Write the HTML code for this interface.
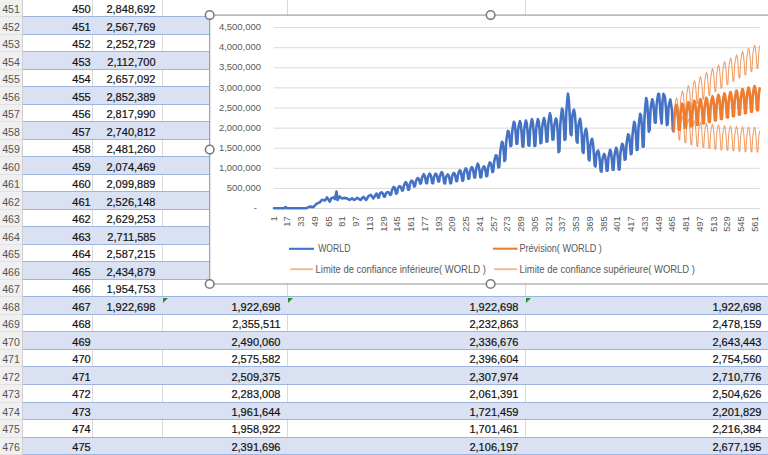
<!DOCTYPE html>
<html><head><meta charset="utf-8"><style>
html,body{margin:0;padding:0;}
body{width:768px;height:455px;overflow:hidden;position:relative;background:#fff;font-family:"Liberation Sans",sans-serif;}
.r{position:absolute;left:23px;width:745px;}
.band{background:#D9E1F2;}
.hl{position:absolute;left:23px;width:745px;height:1px;background:#9CB4DF;}
.hh{position:absolute;left:0;width:22px;height:1px;background:#E2E2E2;}
.vg{position:absolute;width:1px;background:#D9D9D9;}
.t{position:absolute;font-size:11.8px;line-height:13px;transform:scaleX(0.935);transform-origin:100% 50%;color:#111;-webkit-text-stroke:0.2px #111;white-space:nowrap;text-align:right;}
.h{position:absolute;left:0;width:22px;font-size:10.6px;line-height:13px;color:#555;text-align:center;}
.tri{position:absolute;width:0;height:0;border-top:5px solid #2E8B2E;border-right:5px solid transparent;}
</style></head><body>
<div style="position:absolute;left:0;top:0;width:22px;height:455px;background:#F0F0F0;"></div>
<div style="position:absolute;left:22px;top:0;width:1px;height:455px;background:#CFCFCF;"></div>

<div class="vg" style="left:92px;top:0px;height:16px"></div>
<div class="vg" style="left:162px;top:0px;height:16px"></div>
<div class="vg" style="left:287px;top:0px;height:16px"></div>
<div class="vg" style="left:525px;top:0px;height:16px"></div>
<div class="h" style="top:3.29px">451</div>
<div class="t" style="top:3.29px;right:677.8px">450</div>
<div class="t" style="top:3.29px;right:612.4px">2,848,692</div>
<div class="r band" style="top:17px;height:17px"></div>
<div class="h" style="top:20.80px">452</div>
<div class="t" style="top:20.80px;right:677.8px">451</div>
<div class="t" style="top:20.80px;right:612.4px">2,567,769</div>
<div class="vg" style="left:92px;top:35px;height:16px"></div>
<div class="vg" style="left:162px;top:35px;height:16px"></div>
<div class="vg" style="left:287px;top:35px;height:16px"></div>
<div class="vg" style="left:525px;top:35px;height:16px"></div>
<div class="h" style="top:38.30px">453</div>
<div class="t" style="top:38.30px;right:677.8px">452</div>
<div class="t" style="top:38.30px;right:612.4px">2,252,729</div>
<div class="r band" style="top:52px;height:17px"></div>
<div class="h" style="top:55.81px">454</div>
<div class="t" style="top:55.81px;right:677.8px">453</div>
<div class="t" style="top:55.81px;right:612.4px">2,112,700</div>
<div class="vg" style="left:92px;top:70px;height:16px"></div>
<div class="vg" style="left:162px;top:70px;height:16px"></div>
<div class="vg" style="left:287px;top:70px;height:16px"></div>
<div class="vg" style="left:525px;top:70px;height:16px"></div>
<div class="h" style="top:73.31px">455</div>
<div class="t" style="top:73.31px;right:677.8px">454</div>
<div class="t" style="top:73.31px;right:612.4px">2,657,092</div>
<div class="r band" style="top:87px;height:17px"></div>
<div class="h" style="top:90.82px">456</div>
<div class="t" style="top:90.82px;right:677.8px">455</div>
<div class="t" style="top:90.82px;right:612.4px">2,852,389</div>
<div class="vg" style="left:92px;top:105px;height:16px"></div>
<div class="vg" style="left:162px;top:105px;height:16px"></div>
<div class="vg" style="left:287px;top:105px;height:16px"></div>
<div class="vg" style="left:525px;top:105px;height:16px"></div>
<div class="h" style="top:108.32px">457</div>
<div class="t" style="top:108.32px;right:677.8px">456</div>
<div class="t" style="top:108.32px;right:612.4px">2,817,990</div>
<div class="r band" style="top:122px;height:17px"></div>
<div class="h" style="top:125.83px">458</div>
<div class="t" style="top:125.83px;right:677.8px">457</div>
<div class="t" style="top:125.83px;right:612.4px">2,740,812</div>
<div class="vg" style="left:92px;top:140px;height:16px"></div>
<div class="vg" style="left:162px;top:140px;height:16px"></div>
<div class="vg" style="left:287px;top:140px;height:16px"></div>
<div class="vg" style="left:525px;top:140px;height:16px"></div>
<div class="h" style="top:143.34px">459</div>
<div class="t" style="top:143.34px;right:677.8px">458</div>
<div class="t" style="top:143.34px;right:612.4px">2,481,260</div>
<div class="r band" style="top:157px;height:17px"></div>
<div class="h" style="top:160.84px">460</div>
<div class="t" style="top:160.84px;right:677.8px">459</div>
<div class="t" style="top:160.84px;right:612.4px">2,074,469</div>
<div class="vg" style="left:92px;top:175px;height:16px"></div>
<div class="vg" style="left:162px;top:175px;height:16px"></div>
<div class="vg" style="left:287px;top:175px;height:16px"></div>
<div class="vg" style="left:525px;top:175px;height:16px"></div>
<div class="h" style="top:178.34px">461</div>
<div class="t" style="top:178.34px;right:677.8px">460</div>
<div class="t" style="top:178.34px;right:612.4px">2,099,889</div>
<div class="r band" style="top:192px;height:17px"></div>
<div class="h" style="top:195.85px">462</div>
<div class="t" style="top:195.85px;right:677.8px">461</div>
<div class="t" style="top:195.85px;right:612.4px">2,526,148</div>
<div class="vg" style="left:92px;top:210px;height:16px"></div>
<div class="vg" style="left:162px;top:210px;height:16px"></div>
<div class="vg" style="left:287px;top:210px;height:16px"></div>
<div class="vg" style="left:525px;top:210px;height:16px"></div>
<div class="h" style="top:213.35px">463</div>
<div class="t" style="top:213.35px;right:677.8px">462</div>
<div class="t" style="top:213.35px;right:612.4px">2,629,253</div>
<div class="r band" style="top:227px;height:17px"></div>
<div class="h" style="top:230.86px">464</div>
<div class="t" style="top:230.86px;right:677.8px">463</div>
<div class="t" style="top:230.86px;right:612.4px">2,711,585</div>
<div class="vg" style="left:92px;top:245px;height:16px"></div>
<div class="vg" style="left:162px;top:245px;height:16px"></div>
<div class="vg" style="left:287px;top:245px;height:16px"></div>
<div class="vg" style="left:525px;top:245px;height:16px"></div>
<div class="h" style="top:248.37px">465</div>
<div class="t" style="top:248.37px;right:677.8px">464</div>
<div class="t" style="top:248.37px;right:612.4px">2,587,215</div>
<div class="r band" style="top:262px;height:17px"></div>
<div class="h" style="top:265.87px">466</div>
<div class="t" style="top:265.87px;right:677.8px">465</div>
<div class="t" style="top:265.87px;right:612.4px">2,434,879</div>
<div class="vg" style="left:92px;top:280px;height:16px"></div>
<div class="vg" style="left:162px;top:280px;height:16px"></div>
<div class="vg" style="left:287px;top:280px;height:16px"></div>
<div class="vg" style="left:525px;top:280px;height:16px"></div>
<div class="h" style="top:283.37px">467</div>
<div class="t" style="top:283.37px;right:677.8px">466</div>
<div class="t" style="top:283.37px;right:612.4px">1,954,753</div>
<div class="r band" style="top:297px;height:17px"></div>
<div class="h" style="top:300.88px">468</div>
<div class="t" style="top:300.88px;right:677.8px">467</div>
<div class="t" style="top:300.88px;right:612.4px">1,922,698</div>
<div class="t" style="top:300.88px;right:487.3px">1,922,698</div>
<div class="t" style="top:300.88px;right:249.2px">1,922,698</div>
<div class="t" style="top:300.88px;right:6.4px">1,922,698</div>
<div class="tri" style="left:163px;top:298.2px"></div>
<div class="tri" style="left:288px;top:298.2px"></div>
<div class="tri" style="left:526px;top:298.2px"></div>
<div class="vg" style="left:92px;top:315px;height:16px"></div>
<div class="vg" style="left:162px;top:315px;height:16px"></div>
<div class="vg" style="left:287px;top:315px;height:16px"></div>
<div class="vg" style="left:525px;top:315px;height:16px"></div>
<div class="h" style="top:318.38px">469</div>
<div class="t" style="top:318.38px;right:677.8px">468</div>
<div class="t" style="top:318.38px;right:487.3px">2,355,511</div>
<div class="t" style="top:318.38px;right:249.2px">2,232,863</div>
<div class="t" style="top:318.38px;right:6.4px">2,478,159</div>
<div class="r band" style="top:332px;height:17px"></div>
<div class="h" style="top:335.89px">470</div>
<div class="t" style="top:335.89px;right:677.8px">469</div>
<div class="t" style="top:335.89px;right:487.3px">2,490,060</div>
<div class="t" style="top:335.89px;right:249.2px">2,336,676</div>
<div class="t" style="top:335.89px;right:6.4px">2,643,443</div>
<div class="vg" style="left:92px;top:350px;height:16px"></div>
<div class="vg" style="left:162px;top:350px;height:16px"></div>
<div class="vg" style="left:287px;top:350px;height:16px"></div>
<div class="vg" style="left:525px;top:350px;height:16px"></div>
<div class="h" style="top:353.39px">471</div>
<div class="t" style="top:353.39px;right:677.8px">470</div>
<div class="t" style="top:353.39px;right:487.3px">2,575,582</div>
<div class="t" style="top:353.39px;right:249.2px">2,396,604</div>
<div class="t" style="top:353.39px;right:6.4px">2,754,560</div>
<div class="r band" style="top:367px;height:17px"></div>
<div class="h" style="top:370.90px">472</div>
<div class="t" style="top:370.90px;right:677.8px">471</div>
<div class="t" style="top:370.90px;right:487.3px">2,509,375</div>
<div class="t" style="top:370.90px;right:249.2px">2,307,974</div>
<div class="t" style="top:370.90px;right:6.4px">2,710,776</div>
<div class="vg" style="left:92px;top:385px;height:17px"></div>
<div class="vg" style="left:162px;top:385px;height:17px"></div>
<div class="vg" style="left:287px;top:385px;height:17px"></div>
<div class="vg" style="left:525px;top:385px;height:17px"></div>
<div class="h" style="top:388.40px">473</div>
<div class="t" style="top:388.40px;right:677.8px">472</div>
<div class="t" style="top:388.40px;right:487.3px">2,283,008</div>
<div class="t" style="top:388.40px;right:249.2px">2,061,391</div>
<div class="t" style="top:388.40px;right:6.4px">2,504,626</div>
<div class="r band" style="top:403px;height:16px"></div>
<div class="h" style="top:405.91px">474</div>
<div class="t" style="top:405.91px;right:677.8px">473</div>
<div class="t" style="top:405.91px;right:487.3px">1,961,644</div>
<div class="t" style="top:405.91px;right:249.2px">1,721,459</div>
<div class="t" style="top:405.91px;right:6.4px">2,201,829</div>
<div class="vg" style="left:92px;top:420px;height:17px"></div>
<div class="vg" style="left:162px;top:420px;height:17px"></div>
<div class="vg" style="left:287px;top:420px;height:17px"></div>
<div class="vg" style="left:525px;top:420px;height:17px"></div>
<div class="h" style="top:423.41px">475</div>
<div class="t" style="top:423.41px;right:677.8px">474</div>
<div class="t" style="top:423.41px;right:487.3px">1,958,922</div>
<div class="t" style="top:423.41px;right:249.2px">1,701,461</div>
<div class="t" style="top:423.41px;right:6.4px">2,216,384</div>
<div class="r band" style="top:438px;height:16px"></div>
<div class="h" style="top:440.92px">476</div>
<div class="t" style="top:440.92px;right:677.8px">475</div>
<div class="t" style="top:440.92px;right:487.3px">2,391,696</div>
<div class="t" style="top:440.92px;right:249.2px">2,106,197</div>
<div class="t" style="top:440.92px;right:6.4px">2,677,195</div>
<div class="hl" style="top:16px"></div>
<div class="hh" style="top:16px"></div>
<div class="hl" style="top:34px"></div>
<div class="hh" style="top:34px"></div>
<div class="hl" style="top:51px"></div>
<div class="hh" style="top:51px"></div>
<div class="hl" style="top:69px"></div>
<div class="hh" style="top:69px"></div>
<div class="hl" style="top:86px"></div>
<div class="hh" style="top:86px"></div>
<div class="hl" style="top:104px"></div>
<div class="hh" style="top:104px"></div>
<div class="hl" style="top:121px"></div>
<div class="hh" style="top:121px"></div>
<div class="hl" style="top:139px"></div>
<div class="hh" style="top:139px"></div>
<div class="hl" style="top:156px"></div>
<div class="hh" style="top:156px"></div>
<div class="hl" style="top:174px"></div>
<div class="hh" style="top:174px"></div>
<div class="hl" style="top:191px"></div>
<div class="hh" style="top:191px"></div>
<div class="hl" style="top:209px"></div>
<div class="hh" style="top:209px"></div>
<div class="hl" style="top:226px"></div>
<div class="hh" style="top:226px"></div>
<div class="hl" style="top:244px"></div>
<div class="hh" style="top:244px"></div>
<div class="hl" style="top:261px"></div>
<div class="hh" style="top:261px"></div>
<div class="hl" style="top:279px"></div>
<div class="hh" style="top:279px"></div>
<div class="hl" style="top:296px"></div>
<div class="hh" style="top:296px"></div>
<div class="hl" style="top:314px"></div>
<div class="hh" style="top:314px"></div>
<div class="hl" style="top:331px"></div>
<div class="hh" style="top:331px"></div>
<div class="hl" style="top:349px"></div>
<div class="hh" style="top:349px"></div>
<div class="hl" style="top:366px"></div>
<div class="hh" style="top:366px"></div>
<div class="hl" style="top:384px"></div>
<div class="hh" style="top:384px"></div>
<div class="hl" style="top:402px"></div>
<div class="hh" style="top:402px"></div>
<div class="hl" style="top:419px"></div>
<div class="hh" style="top:419px"></div>
<div class="hl" style="top:437px"></div>
<div class="hh" style="top:437px"></div>
<div class="hl" style="top:454px"></div>
<div class="hh" style="top:454px"></div>
<svg width="768" height="455" style="position:absolute;left:0;top:0">
<rect x="209.7" y="15.1" width="561.8" height="268.9" fill="#fff" stroke="#979797" stroke-width="1.1"/>
<line x1="273.7" x2="759.7" y1="208.50" y2="208.50" stroke="#D9D9D9" stroke-width="1"/>
<line x1="273.7" x2="759.7" y1="188.40" y2="188.40" stroke="#D9D9D9" stroke-width="1"/>
<line x1="273.7" x2="759.7" y1="168.30" y2="168.30" stroke="#D9D9D9" stroke-width="1"/>
<line x1="273.7" x2="759.7" y1="148.20" y2="148.20" stroke="#D9D9D9" stroke-width="1"/>
<line x1="273.7" x2="759.7" y1="128.10" y2="128.10" stroke="#D9D9D9" stroke-width="1"/>
<line x1="273.7" x2="759.7" y1="108.00" y2="108.00" stroke="#D9D9D9" stroke-width="1"/>
<line x1="273.7" x2="759.7" y1="87.90" y2="87.90" stroke="#D9D9D9" stroke-width="1"/>
<line x1="273.7" x2="759.7" y1="67.80" y2="67.80" stroke="#D9D9D9" stroke-width="1"/>
<line x1="273.7" x2="759.7" y1="47.70" y2="47.70" stroke="#D9D9D9" stroke-width="1"/>
<line x1="273.7" x2="759.7" y1="27.60" y2="27.60" stroke="#D9D9D9" stroke-width="1"/>
<text x="257" y="211.10" text-anchor="end" font-size="9.9" fill="#595959" font-family="Liberation Sans" textLength="3.15" lengthAdjust="spacingAndGlyphs">-</text>
<text x="261" y="191.00" text-anchor="end" font-size="9.9" fill="#595959" font-family="Liberation Sans" textLength="34.19" lengthAdjust="spacingAndGlyphs">500,000</text>
<text x="261" y="170.90" text-anchor="end" font-size="9.9" fill="#595959" font-family="Liberation Sans" textLength="42.08" lengthAdjust="spacingAndGlyphs">1,000,000</text>
<text x="261" y="150.80" text-anchor="end" font-size="9.9" fill="#595959" font-family="Liberation Sans" textLength="42.08" lengthAdjust="spacingAndGlyphs">1,500,000</text>
<text x="261" y="130.70" text-anchor="end" font-size="9.9" fill="#595959" font-family="Liberation Sans" textLength="42.08" lengthAdjust="spacingAndGlyphs">2,000,000</text>
<text x="261" y="110.60" text-anchor="end" font-size="9.9" fill="#595959" font-family="Liberation Sans" textLength="42.08" lengthAdjust="spacingAndGlyphs">2,500,000</text>
<text x="261" y="90.50" text-anchor="end" font-size="9.9" fill="#595959" font-family="Liberation Sans" textLength="42.08" lengthAdjust="spacingAndGlyphs">3,000,000</text>
<text x="261" y="70.40" text-anchor="end" font-size="9.9" fill="#595959" font-family="Liberation Sans" textLength="42.08" lengthAdjust="spacingAndGlyphs">3,500,000</text>
<text x="261" y="50.30" text-anchor="end" font-size="9.9" fill="#595959" font-family="Liberation Sans" textLength="42.08" lengthAdjust="spacingAndGlyphs">4,000,000</text>
<text x="261" y="30.20" text-anchor="end" font-size="9.9" fill="#595959" font-family="Liberation Sans" textLength="42.08" lengthAdjust="spacingAndGlyphs">4,500,000</text>
<text transform="translate(276.53,216.3) rotate(-90)" text-anchor="end" font-size="9.3" fill="#595959" font-family="Liberation Sans">1</text>
<text transform="translate(290.28,216.3) rotate(-90)" text-anchor="end" font-size="9.3" fill="#595959" font-family="Liberation Sans">17</text>
<text transform="translate(304.03,216.3) rotate(-90)" text-anchor="end" font-size="9.3" fill="#595959" font-family="Liberation Sans">33</text>
<text transform="translate(317.78,216.3) rotate(-90)" text-anchor="end" font-size="9.3" fill="#595959" font-family="Liberation Sans">49</text>
<text transform="translate(331.53,216.3) rotate(-90)" text-anchor="end" font-size="9.3" fill="#595959" font-family="Liberation Sans">65</text>
<text transform="translate(345.28,216.3) rotate(-90)" text-anchor="end" font-size="9.3" fill="#595959" font-family="Liberation Sans">81</text>
<text transform="translate(359.03,216.3) rotate(-90)" text-anchor="end" font-size="9.3" fill="#595959" font-family="Liberation Sans">97</text>
<text transform="translate(372.78,216.3) rotate(-90)" text-anchor="end" font-size="9.3" fill="#595959" font-family="Liberation Sans">113</text>
<text transform="translate(386.53,216.3) rotate(-90)" text-anchor="end" font-size="9.3" fill="#595959" font-family="Liberation Sans">129</text>
<text transform="translate(400.28,216.3) rotate(-90)" text-anchor="end" font-size="9.3" fill="#595959" font-family="Liberation Sans">145</text>
<text transform="translate(414.03,216.3) rotate(-90)" text-anchor="end" font-size="9.3" fill="#595959" font-family="Liberation Sans">161</text>
<text transform="translate(427.78,216.3) rotate(-90)" text-anchor="end" font-size="9.3" fill="#595959" font-family="Liberation Sans">177</text>
<text transform="translate(441.53,216.3) rotate(-90)" text-anchor="end" font-size="9.3" fill="#595959" font-family="Liberation Sans">193</text>
<text transform="translate(455.28,216.3) rotate(-90)" text-anchor="end" font-size="9.3" fill="#595959" font-family="Liberation Sans">209</text>
<text transform="translate(469.04,216.3) rotate(-90)" text-anchor="end" font-size="9.3" fill="#595959" font-family="Liberation Sans">225</text>
<text transform="translate(482.79,216.3) rotate(-90)" text-anchor="end" font-size="9.3" fill="#595959" font-family="Liberation Sans">241</text>
<text transform="translate(496.54,216.3) rotate(-90)" text-anchor="end" font-size="9.3" fill="#595959" font-family="Liberation Sans">257</text>
<text transform="translate(510.29,216.3) rotate(-90)" text-anchor="end" font-size="9.3" fill="#595959" font-family="Liberation Sans">273</text>
<text transform="translate(524.04,216.3) rotate(-90)" text-anchor="end" font-size="9.3" fill="#595959" font-family="Liberation Sans">289</text>
<text transform="translate(537.79,216.3) rotate(-90)" text-anchor="end" font-size="9.3" fill="#595959" font-family="Liberation Sans">305</text>
<text transform="translate(551.54,216.3) rotate(-90)" text-anchor="end" font-size="9.3" fill="#595959" font-family="Liberation Sans">321</text>
<text transform="translate(565.29,216.3) rotate(-90)" text-anchor="end" font-size="9.3" fill="#595959" font-family="Liberation Sans">337</text>
<text transform="translate(579.04,216.3) rotate(-90)" text-anchor="end" font-size="9.3" fill="#595959" font-family="Liberation Sans">353</text>
<text transform="translate(592.79,216.3) rotate(-90)" text-anchor="end" font-size="9.3" fill="#595959" font-family="Liberation Sans">369</text>
<text transform="translate(606.54,216.3) rotate(-90)" text-anchor="end" font-size="9.3" fill="#595959" font-family="Liberation Sans">385</text>
<text transform="translate(620.29,216.3) rotate(-90)" text-anchor="end" font-size="9.3" fill="#595959" font-family="Liberation Sans">401</text>
<text transform="translate(634.04,216.3) rotate(-90)" text-anchor="end" font-size="9.3" fill="#595959" font-family="Liberation Sans">417</text>
<text transform="translate(647.79,216.3) rotate(-90)" text-anchor="end" font-size="9.3" fill="#595959" font-family="Liberation Sans">433</text>
<text transform="translate(661.54,216.3) rotate(-90)" text-anchor="end" font-size="9.3" fill="#595959" font-family="Liberation Sans">449</text>
<text transform="translate(675.29,216.3) rotate(-90)" text-anchor="end" font-size="9.3" fill="#595959" font-family="Liberation Sans">465</text>
<text transform="translate(689.04,216.3) rotate(-90)" text-anchor="end" font-size="9.3" fill="#595959" font-family="Liberation Sans">481</text>
<text transform="translate(702.79,216.3) rotate(-90)" text-anchor="end" font-size="9.3" fill="#595959" font-family="Liberation Sans">497</text>
<text transform="translate(716.54,216.3) rotate(-90)" text-anchor="end" font-size="9.3" fill="#595959" font-family="Liberation Sans">513</text>
<text transform="translate(730.29,216.3) rotate(-90)" text-anchor="end" font-size="9.3" fill="#595959" font-family="Liberation Sans">529</text>
<text transform="translate(744.04,216.3) rotate(-90)" text-anchor="end" font-size="9.3" fill="#595959" font-family="Liberation Sans">545</text>
<text transform="translate(757.79,216.3) rotate(-90)" text-anchor="end" font-size="9.3" fill="#595959" font-family="Liberation Sans">561</text>
<polyline points="673.71,131.21 674.57,118.74 675.43,114.57 676.29,112.16 677.15,115.72 678.01,125.63 678.87,139.30 679.73,140.10 680.59,123.83 681.44,119.53 682.30,116.55 683.16,119.63 684.02,129.13 684.88,142.42 685.74,142.88 686.60,127.27 687.46,122.18 688.32,119.04 689.18,121.99 690.04,131.37 690.90,144.55 691.76,144.91 692.62,129.20 693.48,124.03 694.34,120.81 695.20,123.69 696.05,132.99 696.91,146.11 697.77,146.41 698.63,130.66 699.49,125.43 700.35,122.16 701.21,124.99 702.07,134.25 702.93,147.33 703.79,147.59 704.65,131.80 705.51,126.53 706.37,123.23 707.23,126.03 708.09,135.26 708.95,148.31 709.80,148.54 710.66,132.72 711.52,127.43 712.38,124.10 713.24,126.88 714.10,136.08 714.96,149.11 715.82,149.32 716.68,133.48 717.54,128.16 718.40,124.82 719.26,127.57 720.12,136.76 720.98,149.77 721.84,149.96 722.70,134.10 723.56,128.77 724.41,125.41 725.27,128.15 726.13,137.33 726.99,150.32 727.85,150.50 728.71,134.62 729.57,129.28 730.43,125.91 731.29,128.63 732.15,137.80 733.01,150.78 733.87,150.94 734.73,135.06 735.59,129.70 736.45,126.32 737.31,129.03 738.17,138.19 739.02,151.15 739.88,151.31 740.74,135.42 741.60,130.05 742.46,126.66 743.32,129.37 744.18,138.51 745.04,151.47 745.90,151.62 746.76,135.71 747.62,130.34 748.48,126.94 749.34,129.64 750.20,138.77 751.06,151.72 751.92,151.86 752.77,135.95 753.63,130.57 754.49,127.17 755.35,129.85 756.21,138.98 757.07,151.93 757.93,152.06 758.79,136.14 759.65,130.76" fill="none" stroke="#F2A06A" stroke-width="1.1" stroke-linejoin="round"/>
<polyline points="673.71,131.21 674.57,108.88 675.43,102.23 676.29,97.77 677.15,99.53 678.01,107.81 678.87,119.99 679.73,119.40 680.59,100.88 681.44,95.18 682.30,90.87 683.16,92.69 684.02,100.97 684.88,113.10 685.74,112.44 686.60,95.74 687.46,89.60 688.32,85.44 689.18,87.40 690.04,95.81 690.90,108.05 691.76,107.49 692.62,90.89 693.48,84.83 694.34,80.75 695.20,82.78 696.05,91.26 696.91,103.56 697.77,103.06 698.63,86.51 699.49,80.50 700.35,76.47 701.21,78.55 702.07,87.07 702.93,99.41 703.79,98.95 704.65,82.44 705.51,76.47 706.37,72.48 707.23,74.58 708.09,83.13 708.95,95.51 709.80,95.07 710.66,78.59 711.52,72.65 712.38,68.68 713.24,70.81 714.10,79.38 714.96,91.78 715.82,91.37 716.68,74.91 717.54,68.99 718.40,65.03 719.26,67.19 720.12,75.78 720.98,88.19 721.84,87.80 722.70,71.36 723.56,65.45 724.41,61.51 725.27,63.68 726.13,72.29 726.99,84.72 727.85,84.34 728.71,67.91 729.57,62.01 730.43,58.09 731.29,60.27 732.15,68.89 733.01,81.33 733.87,80.97 734.73,64.55 735.59,58.67 736.45,54.76 737.31,56.95 738.17,65.58 739.02,78.03 739.88,77.67 740.74,61.26 741.60,55.39 742.46,51.49 743.32,53.69 744.18,62.33 745.04,74.79 745.90,74.44 746.76,58.04 747.62,52.18 748.48,48.28 749.34,50.49 750.20,59.14 751.06,71.61 751.92,71.27 752.77,54.87 753.63,49.02 754.49,45.13 755.35,47.35 756.21,56.00 757.07,68.47 757.93,68.14 758.79,51.75 759.65,45.90" fill="none" stroke="#F2A06A" stroke-width="1.1" stroke-linejoin="round"/>
<polyline points="274.00,208.20 284.30,208.20 285.60,207.00 286.90,208.20 306.50,208.20 308.50,207.20 310.40,206.40 312.20,207.20 313.50,206.80 316.70,203.60 319.80,202.40 321.90,199.80 325.00,200.50 327.00,197.40 329.70,201.60 331.25,198.40 333.30,197.40 334.90,199.00 336.50,191.50 337.50,200.00 339.60,196.40 341.70,198.40 343.75,197.90 346.90,198.40 349.50,200.00 352.00,198.40 354.20,200.00 357.30,197.90 360.40,200.00 363.50,196.90 366.10,200.00 368.75,195.80 370.80,194.80 373.40,198.40 376.50,193.50 377.22,194.80 378.08,197.62 378.94,197.51 379.80,194.00 380.65,192.90 381.51,192.28 382.37,192.87 383.23,194.49 384.09,196.69 384.95,196.58 385.81,193.67 386.67,192.63 387.53,192.00 388.39,192.32 389.25,193.18 390.11,194.89 390.97,194.61 391.83,190.78 392.69,188.74 393.55,186.96 394.41,187.22 395.26,189.89 396.12,193.60 396.98,193.22 397.84,188.55 398.70,186.99 399.56,186.06 400.42,186.61 401.28,188.09 402.14,190.64 403.00,190.25 403.86,185.73 404.72,183.64 405.58,182.18 406.44,182.84 407.30,185.56 408.16,189.65 409.01,189.62 409.87,184.03 410.73,182.00 411.59,180.70 412.45,181.26 413.31,183.41 414.17,186.53 415.03,186.04 415.89,181.32 416.75,179.45 417.61,178.12 418.47,178.43 419.33,180.38 420.19,183.55 421.05,183.20 421.91,178.19 422.77,175.97 423.62,174.22 424.48,175.06 425.34,178.37 426.20,183.15 427.06,183.20 427.92,177.20 428.78,175.08 429.64,173.70 430.50,174.74 431.36,178.21 432.22,183.15 433.08,183.20 433.94,177.10 434.80,174.98 435.66,173.70 436.52,174.53 437.38,177.41 438.23,181.56 439.09,181.50 439.95,175.91 440.81,173.73 441.67,172.13 442.53,173.10 443.39,177.40 444.25,183.14 445.11,183.40 445.97,177.34 446.83,175.69 447.69,174.46 448.55,175.26 449.41,178.49 450.27,183.35 451.13,183.14 451.98,176.80 452.84,174.51 453.70,173.00 454.56,173.63 455.42,176.67 456.28,181.23 457.14,181.15 458.00,174.65 458.86,172.09 459.72,170.24 460.58,171.06 461.44,174.90 462.30,180.70 463.16,180.68 464.02,172.97 464.88,170.18 465.74,168.33 466.59,169.33 467.45,173.22 468.31,178.73 469.17,178.49 470.03,171.36 470.89,168.81 471.75,167.13 472.61,168.17 473.47,171.87 474.33,177.50 475.19,177.40 476.05,169.37 476.91,166.11 477.77,163.69 478.63,165.54 479.49,170.70 480.35,177.34 481.20,177.31 482.06,170.24 482.92,168.30 483.78,166.33 484.64,166.98 485.50,170.59 486.36,176.30 487.22,175.92 488.08,167.78 488.94,164.64 489.80,162.45 490.66,163.08 491.52,166.44 492.38,172.07 493.24,171.49 494.10,162.28 494.95,158.31 495.81,155.29 496.67,155.75 497.53,159.76 498.39,167.50 499.25,166.94 500.11,153.16 500.97,146.86 501.83,141.86 502.69,142.53 503.55,149.71 504.41,161.04 505.27,159.80 506.13,142.44 506.99,135.63 507.85,130.91 508.71,131.75 509.56,137.71 510.42,146.20 511.28,145.79 512.14,131.89 513.00,126.13 513.86,121.83 514.72,123.23 515.58,131.76 516.44,143.64 517.30,143.62 518.16,129.26 519.02,124.31 519.88,121.09 520.74,123.71 521.60,132.90 522.46,146.53 523.32,146.66 524.17,129.93 525.03,124.14 525.89,120.45 526.75,123.13 527.61,132.26 528.47,145.39 529.33,145.60 530.19,128.97 531.05,123.07 531.91,119.19 532.77,122.05 533.63,131.88 534.49,145.96 535.35,145.70 536.21,128.53 537.07,122.71 537.92,119.10 538.78,121.75 539.64,130.62 540.50,143.15 541.36,142.86 542.22,127.07 543.08,121.54 543.94,117.97 544.80,120.47 545.66,128.83 546.52,141.59 547.38,141.53 548.24,124.22 549.10,117.64 549.96,113.33 550.82,116.96 551.68,126.81 552.53,139.67 553.39,139.50 554.25,125.87 555.11,121.39 555.97,118.48 556.83,120.53 557.69,132.09 558.55,152.14 559.41,151.17 560.27,125.10 561.13,115.30 561.99,108.57 562.85,110.48 563.71,122.09 564.57,140.03 565.43,139.32 566.29,112.26 567.14,101.24 568.00,93.68 568.86,100.33 569.72,115.61 570.58,134.14 571.44,135.31 572.30,116.31 573.16,111.54 574.02,109.62 574.88,114.19 575.74,125.62 576.60,141.14 577.46,142.75 578.32,126.25 579.18,121.35 580.04,118.79 580.89,123.38 581.75,135.31 582.61,151.77 583.47,152.98 584.33,136.07 585.19,131.27 586.05,128.82 586.91,133.21 587.77,144.31 588.63,159.24 589.49,160.39 590.35,145.04 591.21,140.80 592.07,138.75 592.93,142.93 593.79,152.84 594.65,165.52 595.50,166.50 596.36,154.40 597.22,151.55 598.08,150.57 598.94,153.21 599.80,160.50 600.66,170.95 601.52,171.68 602.38,159.66 603.24,155.95 604.10,153.89 604.96,155.45 605.82,161.46 606.68,170.67 607.54,170.61 608.40,158.03 609.26,153.20 610.11,149.80 610.97,151.77 611.83,159.06 612.69,169.69 613.55,169.66 614.41,156.01 615.27,151.09 616.13,147.79 616.99,149.75 617.85,157.59 618.71,169.48 619.57,169.47 620.43,153.21 621.29,147.45 622.15,143.81 623.01,145.05 623.86,150.90 624.72,159.79 625.58,159.10 626.44,144.79 627.30,138.81 628.16,134.36 629.02,135.26 629.88,142.42 630.74,154.24 631.60,153.58 632.46,135.36 633.32,127.69 634.18,121.86 635.04,123.99 635.90,134.33 636.76,150.06 637.62,149.67 638.47,127.94 639.33,119.60 640.19,113.71 641.05,115.47 641.91,127.33 642.77,146.65 643.63,146.39 644.49,117.58 645.35,106.13 646.21,98.08 647.07,101.41 647.93,115.07 648.79,131.80 649.65,129.99 650.51,109.76 651.37,103.50 652.23,99.32 653.08,101.45 653.94,110.09 654.80,122.49 655.66,122.74 656.52,105.30 657.38,98.61 658.24,93.90 659.10,93.98 659.96,105.28 660.82,117.94 661.68,123.57 662.54,101.68 663.40,93.83 664.26,95.22 665.12,98.32 665.98,108.75 666.83,125.11 667.69,124.08 668.55,106.95 669.41,102.80 670.27,99.49 671.13,104.49 671.99,110.62 672.85,129.92 673.71,131.21" fill="none" stroke="#4472C4" stroke-width="2.6" stroke-linejoin="round" stroke-linecap="round"/>
<polyline points="673.71,131.21 674.57,113.81 675.43,108.40 676.29,104.96 677.15,107.62 678.01,116.72 678.87,129.64 679.73,129.75 680.59,112.35 681.44,107.35 682.30,103.71 683.16,106.16 684.02,115.05 684.88,127.76 685.74,127.66 686.60,111.51 687.46,105.89 688.32,102.24 689.18,104.70 690.04,113.59 690.90,126.30 691.76,126.20 692.62,110.05 693.48,104.43 694.34,100.78 695.20,103.23 696.05,112.12 696.91,124.83 697.77,124.73 698.63,108.58 699.49,102.96 700.35,99.32 701.21,101.77 702.07,110.66 702.93,123.37 703.79,123.27 704.65,107.12 705.51,101.50 706.37,97.85 707.23,100.31 708.09,109.20 708.95,121.91 709.80,121.81 710.66,105.66 711.52,100.04 712.38,96.39 713.24,98.84 714.10,107.73 714.96,120.44 715.82,120.34 716.68,104.19 717.54,98.57 718.40,94.93 719.26,97.38 720.12,106.27 720.98,118.98 721.84,118.88 722.70,102.73 723.56,97.11 724.41,93.46 725.27,95.92 726.13,104.81 726.99,117.52 727.85,117.42 728.71,101.27 729.57,95.65 730.43,92.00 731.29,94.45 732.15,103.34 733.01,116.05 733.87,115.95 734.73,99.80 735.59,94.18 736.45,90.54 737.31,92.99 738.17,101.88 739.02,114.59 739.88,114.49 740.74,98.34 741.60,92.72 742.46,89.07 743.32,91.53 744.18,100.42 745.04,113.13 745.90,113.03 746.76,96.88 747.62,91.26 748.48,87.61 749.34,90.06 750.20,98.95 751.06,111.66 751.92,111.56 752.77,95.41 753.63,89.80 754.49,86.15 755.35,88.60 756.21,97.49 757.07,110.20 757.93,110.10 758.79,93.95 759.65,88.33" fill="none" stroke="#ED7D31" stroke-width="2.7" stroke-linejoin="round" stroke-linecap="round"/>
<line x1="289" x2="314" y1="248.8" y2="248.8" stroke="#4472C4" stroke-width="2.1"/>
<text x="318.2" y="252.0" font-size="10.2" fill="#595959" font-family="Liberation Sans" textLength="32.2" lengthAdjust="spacingAndGlyphs">WORLD</text>
<line x1="493" x2="517.5" y1="248.7" y2="248.7" stroke="#ED7D31" stroke-width="2.1"/>
<text x="519.4" y="252.0" font-size="10.2" fill="#595959" font-family="Liberation Sans" textLength="82.5" lengthAdjust="spacingAndGlyphs">Prévision( WORLD )</text>
<line x1="290.2" x2="313" y1="269.2" y2="269.2" stroke="#F5B78C" stroke-width="1.9"/>
<text x="315.6" y="272.5" font-size="10.2" fill="#595959" font-family="Liberation Sans" textLength="170.2" lengthAdjust="spacingAndGlyphs">Limite de confiance inférieure( WORLD )</text>
<line x1="494" x2="516.9" y1="269.2" y2="269.2" stroke="#F5B78C" stroke-width="1.9"/>
<text x="519.4" y="272.5" font-size="10.2" fill="#595959" font-family="Liberation Sans" textLength="175.6" lengthAdjust="spacingAndGlyphs">Limite de confiance supérieure( WORLD )</text>
<circle cx="209.70" cy="15.10" r="4.3" fill="#fff" stroke="#7C7C7C" stroke-width="1.6"/>
<circle cx="490.60" cy="15.10" r="4.3" fill="#fff" stroke="#7C7C7C" stroke-width="1.6"/>
<circle cx="209.70" cy="149.55" r="4.3" fill="#fff" stroke="#7C7C7C" stroke-width="1.6"/>
<circle cx="209.70" cy="284.00" r="4.3" fill="#fff" stroke="#7C7C7C" stroke-width="1.6"/>
<circle cx="490.60" cy="284.00" r="4.3" fill="#fff" stroke="#7C7C7C" stroke-width="1.6"/>
</svg>
</body></html>
